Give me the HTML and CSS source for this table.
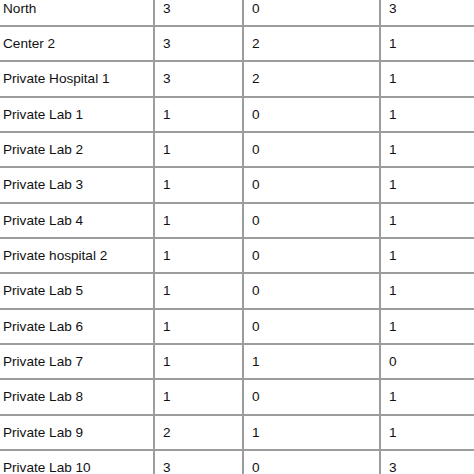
FILE: index.html
```html
<!DOCTYPE html>
<html>
<head>
<meta charset="utf-8">
<link rel="stylesheet" href="styles.css">
</head>
<body>
<div class="table">
  <div class="cell first">North</div><div class="cell">3</div><div class="cell">0</div><div class="cell last">3</div>
  <div class="cell first">Center 2</div><div class="cell">3</div><div class="cell">2</div><div class="cell last">1</div>
  <div class="cell first">Private Hospital 1</div><div class="cell">3</div><div class="cell">2</div><div class="cell last">1</div>
  <div class="cell first">Private Lab 1</div><div class="cell">1</div><div class="cell">0</div><div class="cell last">1</div>
  <div class="cell first">Private Lab 2</div><div class="cell">1</div><div class="cell">0</div><div class="cell last">1</div>
  <div class="cell first">Private Lab 3</div><div class="cell">1</div><div class="cell">0</div><div class="cell last">1</div>
  <div class="cell first">Private Lab 4</div><div class="cell">1</div><div class="cell">0</div><div class="cell last">1</div>
  <div class="cell first">Private hospital 2</div><div class="cell">1</div><div class="cell">0</div><div class="cell last">1</div>
  <div class="cell first">Private Lab 5</div><div class="cell">1</div><div class="cell">0</div><div class="cell last">1</div>
  <div class="cell first">Private Lab 6</div><div class="cell">1</div><div class="cell">0</div><div class="cell last">1</div>
  <div class="cell first">Private Lab 7</div><div class="cell">1</div><div class="cell">1</div><div class="cell last">0</div>
  <div class="cell first">Private Lab 8</div><div class="cell">1</div><div class="cell">0</div><div class="cell last">1</div>
  <div class="cell first">Private Lab 9</div><div class="cell">2</div><div class="cell">1</div><div class="cell last">1</div>
  <div class="cell first">Private Lab 10</div><div class="cell">3</div><div class="cell">0</div><div class="cell last">3</div>
</div>
</body>
</html>
```
FILE: styles.css
```css
html, body {
  margin: 0;
  padding: 0;
  background: #fff;
  overflow: hidden;
  width: 474px;
  height: 474px;
}
.table {
  display: grid;
  grid-template-columns: 155px 89px 137px 93px;
  grid-auto-rows: 35.333px;
  width: 474px;
  margin-top: -8.33px;
  font-family: "Liberation Sans", Arial, sans-serif;
  font-size: 13.6px;
  color: #111;
}
.cell {
  box-sizing: border-box;
  display: flex;
  align-items: center;
  padding-left: 8px;
  border-bottom: 2px solid #9c9c9c;
  border-right: 2px solid #9c9c9c;
  white-space: nowrap;
}
.cell.first {
  padding-left: 3px;
}
.cell.last {
  border-right: none;
}
```
